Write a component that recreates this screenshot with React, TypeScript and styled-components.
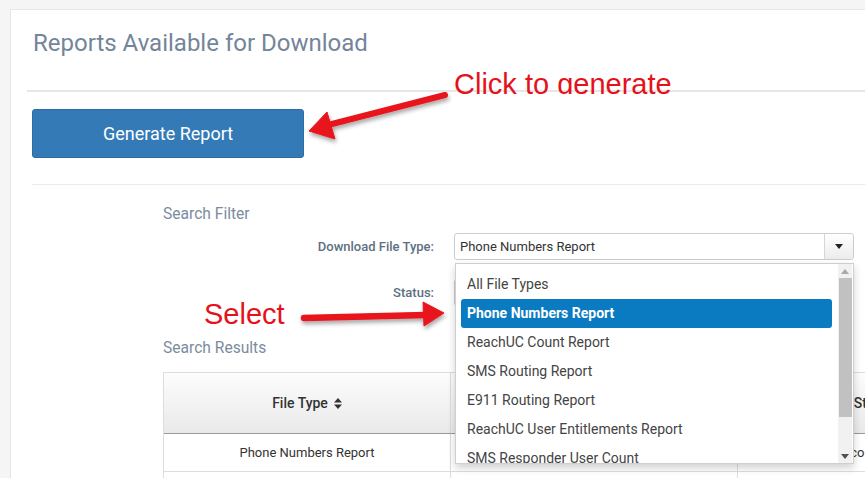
import React from "react";
import styled, { createGlobalStyle } from "styled-components";

const GlobalStyle = createGlobalStyle`
  html, body {
    margin: 0;
    padding: 0;
    background: #f5f5f5;
    overflow: hidden;
  }
  body {
    font-family: Roboto, "Liberation Sans", Arial, sans-serif;
  }
`;

const Page = styled.div`
  position: relative;
  width: 865px;
  height: 478px;
  overflow: hidden;
  padding: 9px 0 0 10px;
  box-sizing: border-box;
`;

const Card = styled.div`
  width: 920px;
  height: 540px;
  background: #fff;
  border: 1px solid #e6e6e6;
  box-sizing: border-box;
`;

const TitleBar = styled.div`
  height: 82px;
  margin-left: 16px;
  border-bottom: 2px solid #e6e7e8;
  box-sizing: border-box;
  padding: 18px 0 0 6px;
`;

const Title = styled.h1`
  margin: 0;
  font-size: 24px;
  line-height: 31px;
  font-weight: 400;
  color: #74859a;
`;

const Toolbar = styled.div`
  margin-left: 21px;
  padding: 17px 0 26px;
  border-bottom: 1px solid #ebebeb;
`;

const PrimaryButton = styled.button`
  width: 272px;
  height: 49px;
  background: #337ab7;
  border: 1px solid #2e6da4;
  border-radius: 3px;
  color: #fff;
  font-family: Roboto, "Liberation Sans", sans-serif;
  font-size: 18px;
  cursor: pointer;
`;

const Section = styled.div`
  padding-left: 152px;
`;

const SectionTitle = styled.div<{ $top: number }>`
  margin-top: ${(p) => p.$top}px;
  font-size: 15.6px;
  line-height: 20px;
  color: #7b8ca0;
`;

const FormRow = styled.div<{ $top: number }>`
  display: flex;
  align-items: center;
  gap: 20px;
  margin-top: ${(p) => p.$top}px;
`;

const Label = styled.label`
  width: 271px;
  text-align: right;
  font-size: 13px;
  font-weight: 500;
  color: #5e6f82;
`;

const SelectBox = styled.div`
  position: relative;
  width: 400px;
  height: 27px;
  display: flex;
  border: 1px solid #cccccc;
  border-radius: 3px;
  box-sizing: border-box;
  background: #fff;
`;

const SelectValue = styled.div`
  flex: 1;
  padding-left: 5px;
  font-size: 13px;
  line-height: 25px;
  color: #333;
`;

const SelectArrow = styled.div`
  width: 28px;
  border-left: 1px solid #d6d6d6;
  background: linear-gradient(#ffffff, #ececec);
  display: flex;
  align-items: center;
  justify-content: center;
  border-radius: 0 3px 3px 0;
`;

const Caret = styled.span<{ $color?: string; $up?: boolean }>`
  width: 0;
  height: 0;
  border-left: 4px solid transparent;
  border-right: 4px solid transparent;
  ${(p) =>
    p.$up
      ? `border-bottom: 5px solid ${p.$color || "#222"};`
      : `border-top: 5px solid ${p.$color || "#222"};`}
`;

const Menu = styled.div`
  position: absolute;
  top: 29px;
  left: 0;
  width: 399px;
  height: 201px;
  display: flex;
  background: #fff;
  border: 1px solid #cfcfcf;
  box-sizing: border-box;
  box-shadow: 0 4px 8px rgba(0, 0, 0, 0.18);
  overflow: hidden;
  z-index: 2;
`;

const MenuList = styled.ul`
  flex: 1;
  list-style: none;
  margin: 0;
  padding: 6px 6px 0 5px;
`;

const MenuItem = styled.li<{ $active?: boolean }>`
  height: 29px;
  line-height: 29px;
  padding-left: 6px;
  border-radius: 3px;
  font-size: 14px;
  color: ${(p) => (p.$active ? "#fff" : "#444")};
  font-weight: ${(p) => (p.$active ? 700 : 400)};
  background: ${(p) => (p.$active ? "#0a7bc1" : "transparent")};
  white-space: nowrap;
`;

const ScrollTrack = styled.div`
  width: 14px;
  margin-right: 1px;
  background: #f1f1f1;
  display: flex;
  flex-direction: column;
  align-items: center;
`;

const ScrollButton = styled.div`
  height: 14px;
  display: flex;
  align-items: center;
  justify-content: center;
`;

const ScrollThumb = styled.div`
  width: 13px;
  height: 139px;
  background: #c1c1c1;
`;

const ScrollRest = styled.div`
  flex: 1;
`;

const Table = styled.div`
  margin-top: 14px;
  border-top: 1px solid #dddddd;
  border-left: 1px solid #dddddd;
`;

const TableRow = styled.div<{ $head?: boolean }>`
  display: grid;
  grid-template-columns: 287px 287px 287px;
  height: ${(p) => (p.$head ? 60 : 37)}px;
  background: ${(p) =>
    p.$head ? "linear-gradient(#fdfdfd, #e9e9e9)" : "#fff"};
  border-bottom: 1px solid ${(p) => (p.$head ? "#9a9a9a" : "#dddddd")};
`;

const Cell = styled.div<{ $head?: boolean }>`
  display: flex;
  align-items: center;
  justify-content: center;
  gap: 6px;
  border-right: 1px solid #dddddd;
  font-size: ${(p) => (p.$head ? 14 : 13)}px;
  font-weight: ${(p) => (p.$head ? 500 : 400)};
  color: #333;
  white-space: nowrap;
`;

const Note = styled.div<{ $x: number; $y: number; $size: number; $clip?: number }>`
  position: absolute;
  left: ${(p) => p.$x}px;
  top: ${(p) => p.$y}px;
  font-family: "Liberation Sans", Arial, sans-serif;
  font-size: ${(p) => p.$size}px;
  line-height: ${(p) => p.$size + 2}px;
  color: #e5121b;
  white-space: nowrap;
  ${(p) => (p.$clip ? `height: ${p.$clip}px; overflow: hidden;` : "")}
  z-index: 3;
`;

const Overlay = styled.svg`
  position: absolute;
  left: 0;
  top: 0;
  pointer-events: none;
  z-index: 3;
`;

const SortIcon = () => (
  <svg width="8" height="11" viewBox="0 0 8 11">
    <path d="M0 4.5 L4 0 L8 4.5 Z M0 6.5 L8 6.5 L4 11 Z" fill="#333" />
  </svg>
);

const fileTypes = [
  "All File Types",
  "Phone Numbers Report",
  "ReachUC Count Report",
  "SMS Routing Report",
  "E911 Routing Report",
  "ReachUC User Entitlements Report",
  "SMS Responder User Count",
  "Call Detail Report",
];

const App = () => {
  const selected = "Phone Numbers Report";

  return (
    <Page>
      <GlobalStyle />
      <Card>
        <TitleBar>
          <Title>Reports Available for Download</Title>
        </TitleBar>
        <Toolbar>
          <PrimaryButton>Generate Report</PrimaryButton>
        </Toolbar>
        <Section>
          <SectionTitle $top={19}>Search Filter</SectionTitle>
          <FormRow $top={9}>
            <Label>Download File Type:</Label>
            <SelectBox>
              <SelectValue>{selected}</SelectValue>
              <SelectArrow>
                <Caret />
              </SelectArrow>
              <Menu>
                <MenuList>
                  {fileTypes.map((t) => (
                    <MenuItem key={t} $active={t === selected}>
                      {t}
                    </MenuItem>
                  ))}
                </MenuList>
                <ScrollTrack>
                  <ScrollButton>
                    <Caret $up $color="#a8a8a8" />
                  </ScrollButton>
                  <ScrollThumb />
                  <ScrollRest />
                  <ScrollButton>
                    <Caret $color="#505050" />
                  </ScrollButton>
                </ScrollTrack>
              </Menu>
            </SelectBox>
          </FormRow>
          <FormRow $top={19}>
            <Label>Status:</Label>
            <SelectBox>
              <SelectValue>All Statuses</SelectValue>
              <SelectArrow>
                <Caret />
              </SelectArrow>
            </SelectBox>
          </FormRow>
          <SectionTitle $top={32}>Search Results</SectionTitle>
          <Table>
            <TableRow $head>
              <Cell $head>
                File Type <SortIcon />
              </Cell>
              <Cell $head>
                Date Requested <SortIcon />
              </Cell>
              <Cell $head>
                Status <SortIcon />
              </Cell>
            </TableRow>
            <TableRow>
              <Cell>Phone Numbers Report</Cell>
              <Cell>03/14/2019 10:22 AM</Cell>
              <Cell>completed</Cell>
            </TableRow>
            <TableRow>
              <Cell />
              <Cell />
              <Cell />
            </TableRow>
          </Table>
        </Section>
      </Card>

      <Note $x={454} $y={69} $size={29} $clip={25}>
        Click to generate
      </Note>
      <Note $x={204} $y={299} $size={29}>
        Select
      </Note>

      <Overlay width="865" height="478" viewBox="0 0 865 478">
        <defs>
          <filter id="shadow" x="-20%" y="-50%" width="140%" height="200%">
            <feDropShadow dx="1" dy="3" stdDeviation="2" floodColor="#000" floodOpacity="0.35" />
          </filter>
        </defs>
        <g filter="url(#shadow)" fill="#e8141b" stroke="#e8141b">
          <line x1="445" y1="95" x2="328" y2="125" strokeWidth="6" strokeLinecap="round" />
          <path d="M309 131 L327 112 L335 139 Z" strokeWidth="1" strokeLinejoin="round" />
          <line x1="304" y1="318" x2="426" y2="315" strokeWidth="6.5" strokeLinecap="round" />
          <path d="M444 313 L423 302 L424 326 Z" strokeWidth="1" strokeLinejoin="round" />
        </g>
      </Overlay>
    </Page>
  );
};

export default App;
